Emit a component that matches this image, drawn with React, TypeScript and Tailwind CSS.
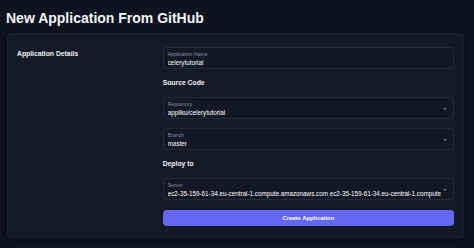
import { ReactNode } from 'react';

function Field({ label, value, select }: { label: string; value: string; select?: boolean }) {
  return (
    <div className="relative h-[22px] overflow-hidden rounded-[3px] border border-[#232b39] bg-[#121825] pl-[4px] pr-[12px] pt-[3px]">
      <p className="text-[5.1px] leading-[7px] text-[#8a93a3]">{label}</p>
      <p className="overflow-hidden whitespace-nowrap text-[6.3px] leading-[9px] text-white">{value}</p>
      {select && (
        <svg className="absolute right-[6px] top-[9px] h-[4px] w-[4px]" viewBox="0 0 10 10">
          <path d="M1 3 L5 7 L9 3 Z" fill="#9aa2b1" />
        </svg>
      )}
    </div>
  );
}

function Heading({ children }: { children: ReactNode }) {
  return <h3 className="text-[6.8px] font-bold leading-[12px] text-[#f1f3f6]">{children}</h3>;
}

export default function App() {
  return (
    <div
      className="min-h-screen w-full bg-[#0e1320] px-[7px] pt-[8px] text-white"
      style={{ fontFamily: '"Liberation Sans", Arial, sans-serif' }}
    >
      <h1 className="-ml-[1px] text-[14px] font-bold leading-[20px] text-[#f4f5f7]">New Application From GitHub</h1>

      <div className="mt-[5px] grid w-[457px] grid-cols-3 rounded-[4px] border border-[#1a2130] bg-[#131926] px-[9px] pb-[11px] pt-[13px] shadow-[0_2px_8px_rgba(0,0,0,0.4)]">
        <h2 className="pt-[1px] text-[6.8px] font-bold leading-[12px] text-[#f1f3f6]">Application Details</h2>

        <div className="col-span-2 flex flex-col">
          <Field label="Application Name" value="celerytutorial" />
          <div className="mt-[8px] mb-[8px]">
            <Heading>Source Code</Heading>
          </div>
          <Field label="Repository" value="appliku/celerytutorial" select />
          <div className="mt-[9px]">
            <Field label="Branch" value="master" select />
          </div>
          <div className="mt-[8px] mb-[8px]">
            <Heading>Deploy to</Heading>
          </div>
          <Field
            label="Server"
            value="ec2-35-159-61-34.eu-central-1.compute.amazonaws.com ec2-35-159-61-34.eu-central-1.compute.amazonaws.com"
            select
          />
          <button
            type="button"
            className="mt-[10px] h-[16px] rounded-[4px] bg-[#6467f2] text-[5.9px] font-bold leading-[16px] text-white"
          >
            Create Application
          </button>
        </div>
      </div>
    </div>
  );
}
